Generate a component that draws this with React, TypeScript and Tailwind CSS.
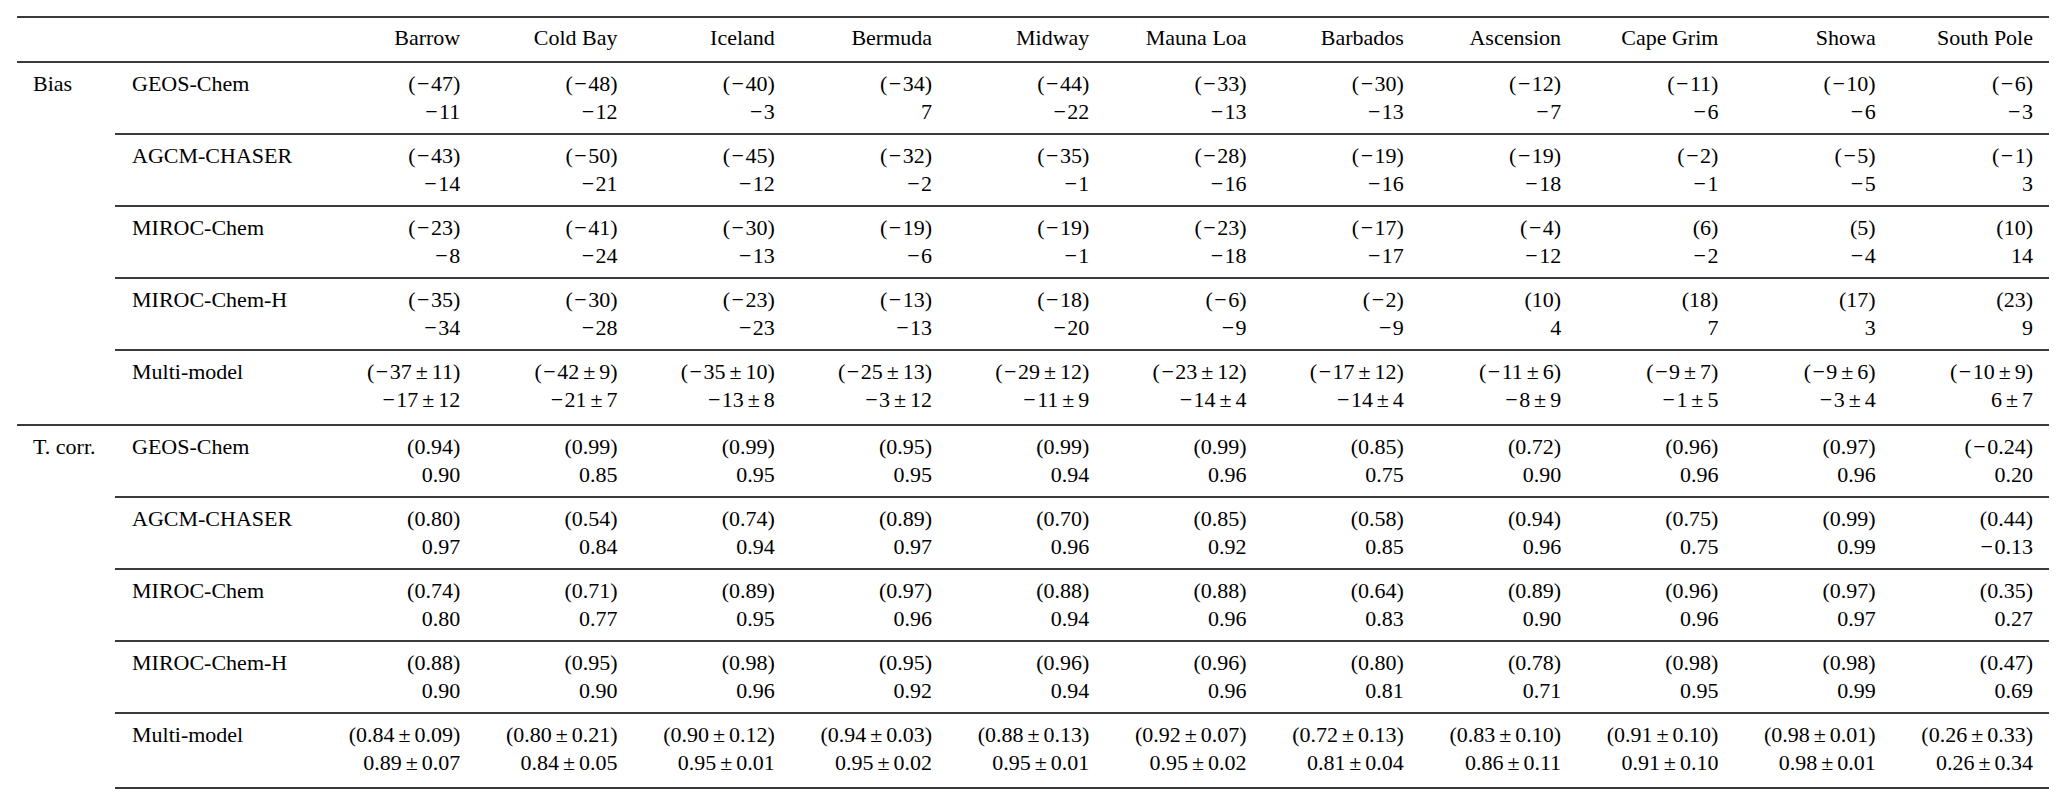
const stations = [
  "Barrow",
  "Cold Bay",
  "Iceland",
  "Bermuda",
  "Midway",
  "Mauna Loa",
  "Barbados",
  "Ascension",
  "Cape Grim",
  "Showa",
  "South Pole",
];

interface ModelRow {
  model: string;
  // each entry: "(first line) second line"
  values: string[];
}

interface Group {
  label: string;
  rows: ModelRow[];
}

const groups: Group[] = [
  {
    label: "Bias",
    rows: [
      {
        model: "GEOS-Chem",
        values: ["(-47) -11", "(-48) -12", "(-40) -3", "(-34) 7", "(-44) -22", "(-33) -13", "(-30) -13", "(-12) -7", "(-11) -6", "(-10) -6", "(-6) -3"],
      },
      {
        model: "AGCM-CHASER",
        values: ["(-43) -14", "(-50) -21", "(-45) -12", "(-32) -2", "(-35) -1", "(-28) -16", "(-19) -16", "(-19) -18", "(-2) -1", "(-5) -5", "(-1) 3"],
      },
      {
        model: "MIROC-Chem",
        values: ["(-23) -8", "(-41) -24", "(-30) -13", "(-19) -6", "(-19) -1", "(-23) -18", "(-17) -17", "(-4) -12", "(6) -2", "(5) -4", "(10) 14"],
      },
      {
        model: "MIROC-Chem-H",
        values: ["(-35) -34", "(-30) -28", "(-23) -23", "(-13) -13", "(-18) -20", "(-6) -9", "(-2) -9", "(10) 4", "(18) 7", "(17) 3", "(23) 9"],
      },
      {
        model: "Multi-model",
        values: ["(-37±11) -17±12", "(-42±9) -21±7", "(-35±10) -13±8", "(-25±13) -3±12", "(-29±12) -11±9", "(-23±12) -14±4", "(-17±12) -14±4", "(-11±6) -8±9", "(-9±7) -1±5", "(-9±6) -3±4", "(-10±9) 6±7"],
      },
    ],
  },
  {
    label: "T. corr.",
    rows: [
      {
        model: "GEOS-Chem",
        values: ["(0.94) 0.90", "(0.99) 0.85", "(0.99) 0.95", "(0.95) 0.95", "(0.99) 0.94", "(0.99) 0.96", "(0.85) 0.75", "(0.72) 0.90", "(0.96) 0.96", "(0.97) 0.96", "(-0.24) 0.20"],
      },
      {
        model: "AGCM-CHASER",
        values: ["(0.80) 0.97", "(0.54) 0.84", "(0.74) 0.94", "(0.89) 0.97", "(0.70) 0.96", "(0.85) 0.92", "(0.58) 0.85", "(0.94) 0.96", "(0.75) 0.75", "(0.99) 0.99", "(0.44) -0.13"],
      },
      {
        model: "MIROC-Chem",
        values: ["(0.74) 0.80", "(0.71) 0.77", "(0.89) 0.95", "(0.97) 0.96", "(0.88) 0.94", "(0.88) 0.96", "(0.64) 0.83", "(0.89) 0.90", "(0.96) 0.96", "(0.97) 0.97", "(0.35) 0.27"],
      },
      {
        model: "MIROC-Chem-H",
        values: ["(0.88) 0.90", "(0.95) 0.90", "(0.98) 0.96", "(0.95) 0.92", "(0.96) 0.94", "(0.96) 0.96", "(0.80) 0.81", "(0.78) 0.71", "(0.98) 0.95", "(0.98) 0.99", "(0.47) 0.69"],
      },
      {
        model: "Multi-model",
        values: ["(0.84±0.09) 0.89±0.07", "(0.80±0.21) 0.84±0.05", "(0.90±0.12) 0.95±0.01", "(0.94±0.03) 0.95±0.02", "(0.88±0.13) 0.95±0.01", "(0.92±0.07) 0.95±0.02", "(0.72±0.13) 0.81±0.04", "(0.83±0.10) 0.86±0.11", "(0.91±0.10) 0.91±0.10", "(0.98±0.01) 0.98±0.01", "(0.26±0.33) 0.26±0.34"],
      },
    ],
  },
];

// Typeset a value: math minus and spaced ± like the LaTeX original
function Num({ text }: { text: string }) {
  const parts = text.split(/(-|±)/);
  return (
    <>
      {parts.map((part, i) => {
        if (part === "-") {
          return (
            <span key={i} className="inline-block w-[0.7em] text-center">
              −
            </span>
          );
        }
        if (part === "±") {
          return (
            <span key={i} className="mx-[0.18em]">
              ±
            </span>
          );
        }
        return <span key={i}>{part}</span>;
      })}
    </>
  );
}

const rule = "border-[#3a3a3a]";

export default function App() {
  return (
    <div className="min-h-[810px] w-[2067px] bg-white pt-[16px] pl-[17px] [font-family:Liberation_Serif,Times_New_Roman,serif] text-[22px] leading-[28px] text-black">
      <table className="w-[2032px] table-fixed border-separate border-spacing-0">
        <colgroup>
          <col className="w-[98px]" />
          <col className="w-[204px]" />
          {stations.map((s) => (
            <col key={s} />
          ))}
        </colgroup>
        <thead>
          <tr>
            <th className={`border-t-2 ${rule} pt-[6px] pb-[9px]`} />
            <th className={`border-t-2 ${rule} pt-[6px] pb-[9px]`} />
            {stations.map((s) => (
              <th
                key={s}
                className={`border-t-2 ${rule} pt-[6px] pb-[9px] pr-4 text-right font-normal whitespace-nowrap`}
              >
                {s}
              </th>
            ))}
          </tr>
        </thead>
        <tbody>
          {groups.map((group, gi) =>
            group.rows.map((row, ri) => {
              const first = ri === 0;
              const last = gi === groups.length - 1 && ri === group.rows.length - 1;
              const multi = row.model === "Multi-model";
              const pad = multi ? "pt-[7px] pb-[10px]" : "pt-[7px] pb-[7px]";
              const bottom = last ? `border-b-2 ${rule}` : "";
              return (
                <tr key={group.label + row.model}>
                  <td
                    className={`border-t-2 ${first ? rule : "border-transparent"} ${bottom} ${pad} pl-4 align-top whitespace-nowrap`}
                  >
                    {first ? group.label : ""}
                  </td>
                  <td className={`border-t-2 ${rule} ${bottom} ${pad} pl-[17px] align-top whitespace-nowrap`}>
                    {row.model}
                  </td>
                  {row.values.map((v, vi) => {
                    const [top, bot] = v.split(" ");
                    return (
                      <td
                        key={vi}
                        className={`border-t-2 ${rule} ${bottom} ${pad} pr-4 text-right align-top whitespace-nowrap`}
                      >
                        <div>
                          <Num text={top} />
                        </div>
                        <div>
                          <Num text={bot} />
                        </div>
                      </td>
                    );
                  })}
                </tr>
              );
            }),
          )}
        </tbody>
      </table>
    </div>
  );
}
